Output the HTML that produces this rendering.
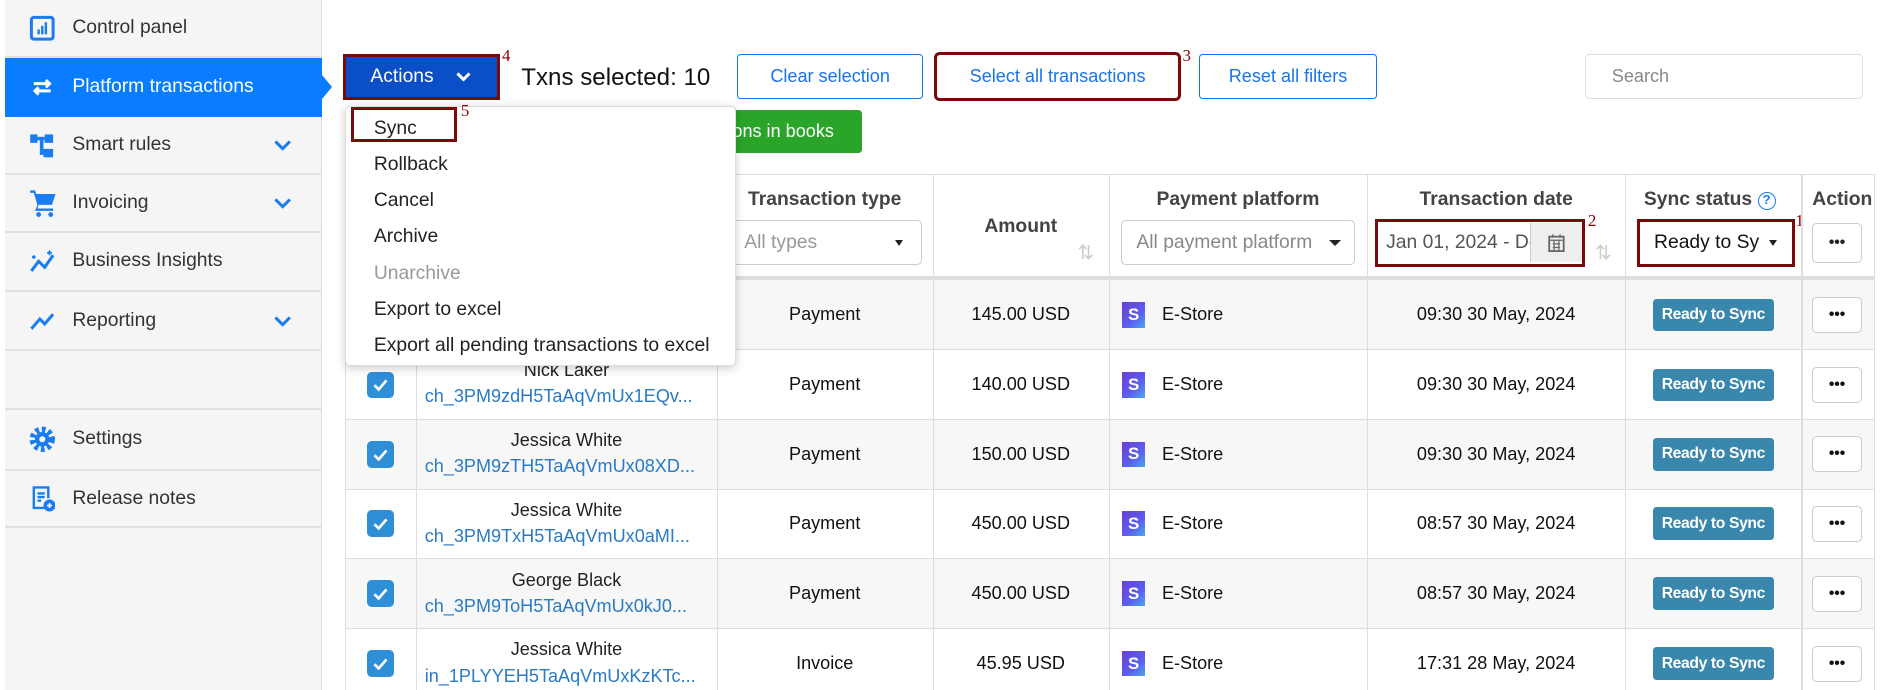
<!DOCTYPE html>
<html><head><meta charset="utf-8"><style>
*{box-sizing:border-box;margin:0;padding:0}
html,body{width:1892px;height:690px;overflow:hidden;background:#fff}
#w{zoom:1.2066;width:1568px;height:572px;position:relative;font-family:"Liberation Sans",sans-serif;color:#222;overflow:hidden}
.a{position:absolute}
.side{left:0;top:0;width:267px;height:572px;background:#f5f5f5;border-right:1px solid #ddd}
.side .strip{left:0;top:0;width:4px;height:572px;background:#fff}
.it{left:4px;width:263px;border-bottom:2px solid #e0e0e0;font-size:16px;color:#333;display:flex;align-items:center;padding-left:56px}
.it svg.ic{position:absolute;left:20px}
.chev{position:absolute;left:222px}
.btn{border:1px solid #1a73e8;border-radius:3px;color:#1a73e8;font-size:15px;display:flex;align-items:center;justify-content:center;background:#fff}
.red{outline:3px solid #7a0a0a;outline-offset:-1px}
.num{color:#8b0000;font-size:14px;font-family:"Liberation Serif",serif}
.th{font-size:16px;color:#444;font-weight:bold;text-align:center}
.cell{display:flex;align-items:center;justify-content:center;font-size:15px;color:#111}
.row{left:286px;width:1268px;height:58px;border-bottom:1px solid #ddd}
.vl{width:1px;background:#ddd}
.cb{width:22px;height:22px;border-radius:4px;background:#2f8fd6;display:flex;align-items:center;justify-content:center}
.rs{background:#3a87ad;color:#fff;font-size:13px;font-weight:bold;border-radius:3px;width:100px;height:27px;display:flex;align-items:center;justify-content:center;letter-spacing:-.3px}
.dots{width:41px;height:30px;border:1px solid #ccc;border-radius:4px;display:flex;align-items:center;justify-content:center;font-weight:bold;font-size:13px;background:#fff}
.sicon{width:19px;height:21px;background:linear-gradient(135deg,#6a3fd0,#5b5ef0 60%,#4aa8f0);color:#fff;font-weight:bold;font-size:14px;display:flex;align-items:center;justify-content:center;margin-right:14px}
.sel{border:1px solid #ccc;border-radius:4px;display:flex;align-items:center;font-size:16px;color:#888;padding-left:12px}
.caret{width:0;height:0;border-left:4px solid transparent;border-right:4px solid transparent;border-top:5px solid #222;position:absolute}
.dd div{height:30px;display:flex;align-items:center;padding-left:23px;font-size:16px;color:#222}
</style></head><body><div id="w">

<div class="a side"><div class="a strip"></div></div>
<div class="a it" style="top:0;height:48px;border-bottom:2px solid #e0e0e0"><svg class="ic" width="22" height="22" viewBox="0 0 22 22"><rect x="2" y="2" width="18" height="18" rx="2" fill="none" stroke="#1a7cf0" stroke-width="2.5"/><rect x="7" y="12" width="2" height="4" fill="#1a7cf0"/><rect x="10" y="9" width="2" height="7" fill="#1a7cf0"/><rect x="13" y="6" width="2" height="10" fill="#1a7cf0"/></svg>Control panel</div>
<div class="a it" style="top:48px;height:49px;background:#0a7cff;color:#fff;border-bottom:none"><svg class="ic" width="22" height="22" viewBox="0 0 22 22" fill="none" stroke="#fff" stroke-width="2.5"><path d="M4 8h13M14 5l3 3-3 3M18 14H5M8 11l-3 3 3 3"/></svg>Platform transactions</div>
<div class="a" style="left:267px;top:62px;width:0;height:0;border-top:10px solid transparent;border-bottom:10px solid transparent;border-left:9px solid #0a7cff"></div>
<div class="a it" style="top:97px;height:48px"><svg class="ic" width="22" height="22" viewBox="0 0 22 22" fill="#1a7cf0"><rect x="1" y="2" width="6" height="7"/><rect x="7" y="4" width="6" height="3"/><rect x="13" y="2" width="7" height="7"/><rect x="9" y="7" width="3" height="12"/><rect x="12" y="14" width="8" height="7"/></svg>Smart rules<svg class="chev" width="16" height="10" viewBox="0 0 16 10"><path d="M2 2l6 6 6-6" fill="none" stroke="#1a7cf0" stroke-width="2.5"/></svg></div>
<div class="a it" style="top:145px;height:48px"><svg class="ic" width="24" height="24" viewBox="0 0 24 24" fill="#1a7cf0"><path d="M1 2h4l1 3h16l-3 9H8l-1 3h13v2H5l2-5L4 4H1z"/><circle cx="8" cy="22" r="2"/><circle cx="18" cy="22" r="2"/></svg>Invoicing<svg class="chev" width="16" height="10" viewBox="0 0 16 10"><path d="M2 2l6 6 6-6" fill="none" stroke="#1a7cf0" stroke-width="2.5"/></svg></div>
<div class="a it" style="top:193px;height:49px"><svg class="ic" width="24" height="22" viewBox="0 0 24 22" fill="none" stroke="#1a7cf0" stroke-width="2.5"><path d="M2 19l6-8 5 5 7-10"/><path d="M17 2v4M15 4h4M4 6v3M2.5 7.5h3" stroke-width="1.5"/></svg>Business Insights</div>
<div class="a it" style="top:242px;height:49px"><svg class="ic" width="22" height="22" viewBox="0 0 22 22" fill="none" stroke="#1a7cf0" stroke-width="2.5"><path d="M2 18l7-8 4 4 7-8"/></svg>Reporting<svg class="chev" width="16" height="10" viewBox="0 0 16 10"><path d="M2 2l6 6 6-6" fill="none" stroke="#1a7cf0" stroke-width="2.5"/></svg></div>
<div class="a it" style="top:291px;height:49px"></div>
<div class="a it" style="top:340px;height:50px"><svg class="ic" width="22" height="22" viewBox="0 0 22 22"><circle cx="11" cy="11" r="8" fill="none" stroke="#1a7cf0" stroke-width="5" stroke-dasharray="3 2.3"/><circle cx="11" cy="11" r="6" fill="#1a7cf0"/><circle cx="11" cy="11" r="2.5" fill="#f5f5f5"/></svg>Settings</div>
<div class="a it" style="top:390px;height:48px"><svg class="ic" width="22" height="22" viewBox="0 0 22 22" fill="none" stroke="#1a7cf0" stroke-width="2"><path d="M13 19H4V2h12v9"/><path d="M7 7h6M7 10h6M7 13h3"/><circle cx="17" cy="17" r="4" fill="#1a7cf0"/><path d="M17 15v4M15 17h4" stroke="#fff" stroke-width="1.5"/></svg>Release notes</div>

<!-- toolbar -->
<div class="a red" style="left:286px;top:46px;width:127px;height:35px;background:#0a4fc7;color:#fff;font-size:16px;display:flex;align-items:center;padding-left:21px">Actions<svg style="margin-left:18px" width="14" height="9" viewBox="0 0 14 9"><path d="M2 2l5 5 5-5" fill="none" stroke="#fff" stroke-width="2.5"/></svg></div>
<div class="a num" style="left:416px;top:38px">4</div>
<div class="a" style="left:432px;top:53px;font-size:20px;color:#111">Txns selected: 10</div>
<div class="a btn" style="left:611px;top:45px;width:154px;height:37px">Clear selection</div>
<div class="a btn red" style="left:776px;top:45px;width:201px;height:37px;border-color:#1a73e8">Select all transactions</div>
<div class="a num" style="left:980px;top:38px">3</div>
<div class="a btn" style="left:994px;top:45px;width:147px;height:37px">Reset all filters</div>
<div class="a" style="left:1314px;top:45px;width:230px;height:37px;border:1px solid #ddd;border-radius:4px;font-size:15px;color:#888;display:flex;align-items:center;padding-left:21px">Search</div>
<div class="a" style="left:560px;top:91px;width:154px;height:36px;background:#2aa52a;border-radius:3px;color:#fff;font-size:15px;display:flex;align-items:center;padding-left:47px">ons in books</div>

<!-- table header -->
<div class="a" style="left:286px;top:144px;width:1268px;height:88px;border-top:1px solid #ddd;border-bottom:4px solid #ddd"></div>
<div class="a th" style="left:594px;top:157px;width:179px">Transaction type</div>
<div class="a sel" style="left:604px;top:182px;width:160px;height:38px;color:#999">All types<div class="caret" style="left:137px;top:16px"></div></div>
<div class="a th" style="left:773px;top:179px;width:146px">Amount</div>
<div class="a" style="left:893px;top:200px;color:#ccc;font-size:16px">⇅</div>
<div class="a th" style="left:919px;top:157px;width:214px">Payment platform</div>
<div class="a sel" style="left:929px;top:182px;width:194px;height:38px;overflow:hidden;white-space:nowrap">All payment platform<div class="caret" style="left:172px;top:16px;border-left-width:5px;border-right-width:5px"></div></div>
<div class="a th" style="left:1133px;top:157px;width:214px">Transaction date</div>
<div class="a red" style="left:1141px;top:183px;width:171px;height:37px;border:1px solid #ccc;background:#fff;font-size:16px;color:#555;display:flex;align-items:center;padding-left:7px;overflow:hidden;white-space:nowrap">Jan 01, 2024 - De<div class="a" style="left:126px;top:1px;width:43px;height:32px;background:#eee;border-left:1px solid #ccc;display:flex;align-items:center;justify-content:center"><svg width="14" height="16" viewBox="0 0 14 16"><rect x="1" y="3" width="12" height="12" fill="none" stroke="#666" stroke-width="1.5"/><path d="M1 6h12M4 9h6M4 12h6M5 6v9M9 6v9M4 1v3M10 1v3" stroke="#666" stroke-width="1"/></svg></div></div>
<div class="a num" style="left:1316px;top:175px">2</div>
<div class="a" style="left:1322px;top:200px;color:#ccc;font-size:16px">⇅</div>
<div class="a th" style="left:1347px;top:157px;width:140px">Sync status <span style="display:inline-block;width:15px;height:15px;border:1.5px solid #1a7cf0;border-radius:50%;color:#1a7cf0;font-size:11px;line-height:12px;vertical-align:1px">?</span></div>
<div class="a red" style="left:1358px;top:183px;width:128px;height:37px;border:1px solid #ccc;font-size:16px;color:#111;display:flex;align-items:center;padding-left:12px;overflow:hidden;white-space:nowrap">Ready to Sy<div class="caret" style="left:107px;top:15px"></div></div>
<div class="a num" style="left:1488px;top:175px">1</div>
<div class="a th" style="left:1495px;top:157px;width:60px;text-align:left;padding-left:7px">Action</div>
<div class="a dots" style="left:1502px;top:185px;height:33px">•••</div>

<!-- rows -->
<div id="rows"></div>
<div class="a row" style="top:232px;background:#f7f7f7"></div>
<div class="a row" style="top:290px"></div>
<div class="a row" style="top:348px;background:#f7f7f7"></div>
<div class="a row" style="top:405px"></div>
<div class="a row" style="top:463px;background:#f7f7f7"></div>
<div class="a row" style="top:521px;height:60px"></div>

<div class="a vl" style="left:286px;top:144px;height:430px"></div>
<div class="a vl" style="left:345px;top:232px;height:340px"></div>
<div class="a vl" style="left:594px;top:144px;height:430px"></div>
<div class="a vl" style="left:773px;top:144px;height:430px"></div>
<div class="a vl" style="left:919px;top:144px;height:430px"></div>
<div class="a vl" style="left:1133px;top:144px;height:430px"></div>
<div class="a vl" style="left:1347px;top:144px;height:430px"></div>
<div class="a vl" style="left:1493px;top:144px;height:430px"></div>
<div class="a vl" style="left:1553px;top:144px;height:430px"></div>

<!-- row contents -->
<div class="a" style="left:0;top:0">
<!-- row generator via repeated blocks -->
</div>

<div class="a cell" style="left:594px;top:232px;width:179px;height:58px">Payment</div>
<div class="a cell" style="left:773px;top:232px;width:146px;height:58px">145.00 USD</div>
<div class="a cell" style="left:930px;top:232px;height:58px"><div class="sicon">S</div>E-Store</div>
<div class="a cell" style="left:1133px;top:232px;width:214px;height:58px">09:30 30 May, 2024</div>
<div class="a cell" style="left:1370px;top:232px;height:58px"><div class="rs">Ready to Sync</div></div>
<div class="a cell" style="left:1502px;top:232px;height:58px"><div class="dots">•••</div></div>

<div class="a cell" style="left:286px;top:290px;width:59px;height:58px"><div class="cb"><svg width="14" height="11"><path d="M2 6l3.5 3.5L12 2" fill="none" stroke="#fff" stroke-width="2.2"/></svg></div></div>
<div class="a" style="left:345px;top:298px;width:249px;text-align:center;font-size:15px">Nick Laker</div>
<div class="a" style="left:352px;top:320px;font-size:15px;color:#2a7bc4">ch_3PM9zdH5TaAqVmUx1EQv...</div>
<div class="a cell" style="left:594px;top:290px;width:179px;height:58px">Payment</div>
<div class="a cell" style="left:773px;top:290px;width:146px;height:58px">140.00 USD</div>
<div class="a cell" style="left:930px;top:290px;height:58px"><div class="sicon">S</div>E-Store</div>
<div class="a cell" style="left:1133px;top:290px;width:214px;height:58px">09:30 30 May, 2024</div>
<div class="a cell" style="left:1370px;top:290px;height:58px"><div class="rs">Ready to Sync</div></div>
<div class="a cell" style="left:1502px;top:290px;height:58px"><div class="dots">•••</div></div>

<div class="a cell" style="left:286px;top:348px;width:59px;height:57px"><div class="cb"><svg width="14" height="11"><path d="M2 6l3.5 3.5L12 2" fill="none" stroke="#fff" stroke-width="2.2"/></svg></div></div>
<div class="a" style="left:345px;top:356px;width:249px;text-align:center;font-size:15px">Jessica White</div>
<div class="a" style="left:352px;top:378px;font-size:15px;color:#2a7bc4">ch_3PM9zTH5TaAqVmUx08XD...</div>
<div class="a cell" style="left:594px;top:348px;width:179px;height:57px">Payment</div>
<div class="a cell" style="left:773px;top:348px;width:146px;height:57px">150.00 USD</div>
<div class="a cell" style="left:930px;top:348px;height:57px"><div class="sicon">S</div>E-Store</div>
<div class="a cell" style="left:1133px;top:348px;width:214px;height:57px">09:30 30 May, 2024</div>
<div class="a cell" style="left:1370px;top:348px;height:57px"><div class="rs">Ready to Sync</div></div>
<div class="a cell" style="left:1502px;top:348px;height:57px"><div class="dots">•••</div></div>

<div class="a cell" style="left:286px;top:405px;width:59px;height:58px"><div class="cb"><svg width="14" height="11"><path d="M2 6l3.5 3.5L12 2" fill="none" stroke="#fff" stroke-width="2.2"/></svg></div></div>
<div class="a" style="left:345px;top:414px;width:249px;text-align:center;font-size:15px">Jessica White</div>
<div class="a" style="left:352px;top:436px;font-size:15px;color:#2a7bc4">ch_3PM9TxH5TaAqVmUx0aMI...</div>
<div class="a cell" style="left:594px;top:405px;width:179px;height:58px">Payment</div>
<div class="a cell" style="left:773px;top:405px;width:146px;height:58px">450.00 USD</div>
<div class="a cell" style="left:930px;top:405px;height:58px"><div class="sicon">S</div>E-Store</div>
<div class="a cell" style="left:1133px;top:405px;width:214px;height:58px">08:57 30 May, 2024</div>
<div class="a cell" style="left:1370px;top:405px;height:58px"><div class="rs">Ready to Sync</div></div>
<div class="a cell" style="left:1502px;top:405px;height:58px"><div class="dots">•••</div></div>

<div class="a cell" style="left:286px;top:463px;width:59px;height:58px"><div class="cb"><svg width="14" height="11"><path d="M2 6l3.5 3.5L12 2" fill="none" stroke="#fff" stroke-width="2.2"/></svg></div></div>
<div class="a" style="left:345px;top:472px;width:249px;text-align:center;font-size:15px">George Black</div>
<div class="a" style="left:352px;top:494px;font-size:15px;color:#2a7bc4">ch_3PM9ToH5TaAqVmUx0kJ0...</div>
<div class="a cell" style="left:594px;top:463px;width:179px;height:58px">Payment</div>
<div class="a cell" style="left:773px;top:463px;width:146px;height:58px">450.00 USD</div>
<div class="a cell" style="left:930px;top:463px;height:58px"><div class="sicon">S</div>E-Store</div>
<div class="a cell" style="left:1133px;top:463px;width:214px;height:58px">08:57 30 May, 2024</div>
<div class="a cell" style="left:1370px;top:463px;height:58px"><div class="rs">Ready to Sync</div></div>
<div class="a cell" style="left:1502px;top:463px;height:58px"><div class="dots">•••</div></div>

<div class="a cell" style="left:286px;top:521px;width:59px;height:58px"><div class="cb"><svg width="14" height="11"><path d="M2 6l3.5 3.5L12 2" fill="none" stroke="#fff" stroke-width="2.2"/></svg></div></div>
<div class="a" style="left:345px;top:530px;width:249px;text-align:center;font-size:15px">Jessica White</div>
<div class="a" style="left:352px;top:552px;font-size:15px;color:#2a7bc4">in_1PLYYEH5TaAqVmUxKzKTc...</div>
<div class="a cell" style="left:594px;top:521px;width:179px;height:58px">Invoice</div>
<div class="a cell" style="left:773px;top:521px;width:146px;height:58px">45.95 USD</div>
<div class="a cell" style="left:930px;top:521px;height:58px"><div class="sicon">S</div>E-Store</div>
<div class="a cell" style="left:1133px;top:521px;width:214px;height:58px">17:31 28 May, 2024</div>
<div class="a cell" style="left:1370px;top:521px;height:58px"><div class="rs">Ready to Sync</div></div>
<div class="a cell" style="left:1502px;top:521px;height:58px"><div class="dots">•••</div></div>

<!-- dropdown -->
<div class="a dd" style="left:286px;top:88px;width:324px;height:215px;background:#fff;border:1px solid #ddd;border-radius:4px;box-shadow:0 2px 8px rgba(0,0,0,.2);padding-top:3px">
<div>Sync</div><div>Rollback</div><div>Cancel</div><div>Archive</div><div style="color:#999">Unarchive</div><div>Export to excel</div><div>Export all pending transactions to excel</div>
</div>
<div class="a" style="left:291px;top:89px;width:88px;height:29px;border:3px solid #7a0a0a"></div>
<div class="a num" style="left:382px;top:84px">5</div>

</div></body></html>
